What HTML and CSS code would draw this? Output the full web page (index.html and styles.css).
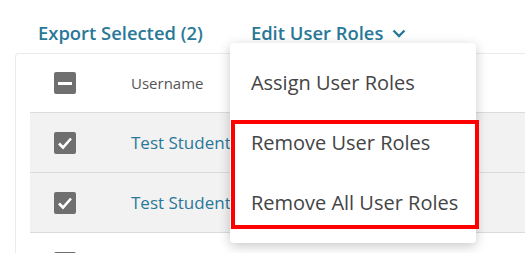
FILE: index.html
```html
<!DOCTYPE html>
<html lang="en">
<head>
    <meta charset="UTF-8">
    <meta name="viewport" content="width=device-width, initial-scale=1.0">
    <title>Users</title>
    <link rel="stylesheet" href="styles.css">
</head>
<body>
    <div class="toolbar">
        <button class="action">Export Selected (2)</button>
        <div class="menu-wrap">
            <button class="action">Edit User Roles
                <svg class="chevron" width="14" height="9" viewBox="0 0 14 9"><path d="M1.5 1.5 L7 7 L12.5 1.5" fill="none" stroke="#2a7898" stroke-width="2.4"/></svg>
            </button>
            <div class="dropdown">
                <div class="item">Assign User Roles</div>
                <div class="item">Remove User Roles</div>
                <div class="item">Remove All User Roles</div>
                <div class="highlight"></div>
            </div>
        </div>
    </div>

    <div class="card">
        <div class="row head">
            <span class="box"><span class="dash"></span></span>
            <span class="col-name">Username</span>
        </div>
        <div class="row selected">
            <span class="box"><svg width="22" height="22" viewBox="0 0 22 22"><path d="M5 11.5 L9 15.5 L17 6.5" fill="none" stroke="#fff" stroke-width="2.6"/></svg></span>
            <a class="user">Test Student</a>
        </div>
        <div class="row selected">
            <span class="box"><svg width="22" height="22" viewBox="0 0 22 22"><path d="M5 11.5 L9 15.5 L17 6.5" fill="none" stroke="#fff" stroke-width="2.6"/></svg></span>
            <a class="user">Test Student</a>
        </div>
        <div class="row">
            <span class="box"></span>
        </div>
    </div>
</body>
</html>
```

FILE: styles.css
```css
* {
    margin: 0;
    padding: 0;
    box-sizing: border-box;
    font-family: "Open Sans", sans-serif;
}
html, body {
    height: 253px;
    overflow: hidden;
}
body {
    background: #fff;
}
.toolbar {
    display: flex;
    align-items: center;
    gap: 48px;
    height: 53px;
    padding: 11px 0 0 38px;
}
.action {
    display: flex;
    align-items: center;
    gap: 9px;
    border: none;
    background: none;
    color: #2a7898;
    font-size: 18.4px;
    font-weight: 600;
    cursor: pointer;
}
.chevron {
    margin-top: 2px;
}
.menu-wrap {
    position: relative;
}
.dropdown {
    position: absolute;
    left: -21px;
    top: 23px;
    width: 246px;
    padding: 10px 0;
    background: #fff;
    border-radius: 4px;
    box-shadow: 0 3px 12px rgba(0, 0, 0, 0.22);
    z-index: 2;
}
.item {
    height: 60px;
    display: flex;
    align-items: center;
    padding-left: 21px;
    font-size: 20px;
    color: #444;
}
.highlight {
    position: absolute;
    left: 1px;
    top: 77px;
    width: 248px;
    height: 109px;
    border: 4px solid #f00;
}
.card {
    margin-left: 15px;
    padding-left: 14px;
    border: 1px solid #ebebeb;
    border-right: none;
    border-bottom: none;
    border-radius: 4px 0 0 0;
}
.row {
    display: flex;
    align-items: center;
    height: 60px;
    border-bottom: 1px solid #dcdcdc;
}
.row.head {
    height: 59px;
}
.row.selected {
    background: #f2f2f2;
}
.box {
    width: 22px;
    height: 22px;
    margin-left: 24px;
    margin-right: 55px;
    background: #6f6f6f;
    border-radius: 2px;
    display: flex;
    align-items: center;
    justify-content: center;
}
.dash {
    width: 14px;
    height: 3px;
    background: #fff;
}
.col-name {
    font-size: 15px;
    color: #555;
}
.user {
    font-size: 17px;
    color: #2a7898;
}
```
